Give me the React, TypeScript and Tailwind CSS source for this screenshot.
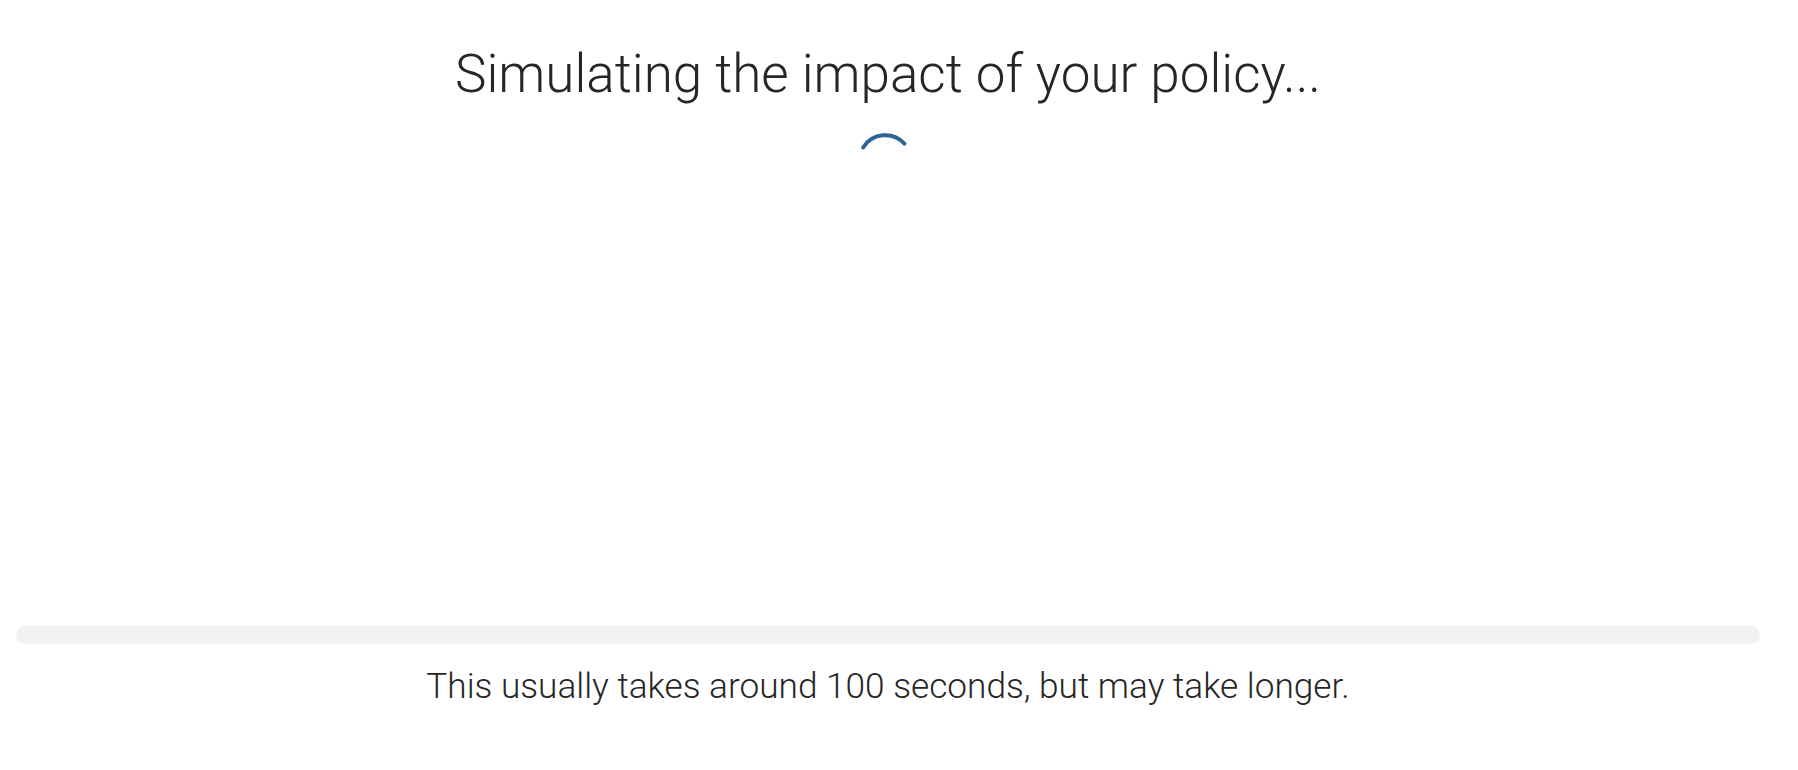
import React from "react";

export default function App() {
  return (
    <div className="w-[1776px] min-h-[770px] bg-white px-4 flex flex-col items-center" style={{ fontFamily: "Roboto, 'Liberation Sans', sans-serif" }}>
      <h1 className="mt-[43px] text-[53px] leading-[1.2] font-light text-[#262626] tracking-normal">
        Simulating the impact of your policy...
      </h1>
      <div className="mt-[26px] h-[56px] w-[56px] -translate-x-[3px]">
        <svg width="56" height="56" viewBox="0 0 56 56" fill="none">
          <path d="M6.2 14.5 A26 26 0 0 1 47.4 10.6" stroke="#2c6496" strokeWidth="4" strokeLinecap="round" />
        </svg>
      </div>
      <div className="mt-[437px] h-[18px] w-full rounded-full bg-[#f2f2f2]" />
      <p className="mt-[16px] text-[35.2px] leading-[1.5] font-light text-[#262626]">
        This usually takes around 100 seconds, but may take longer.
      </p>
    </div>
  );
}
